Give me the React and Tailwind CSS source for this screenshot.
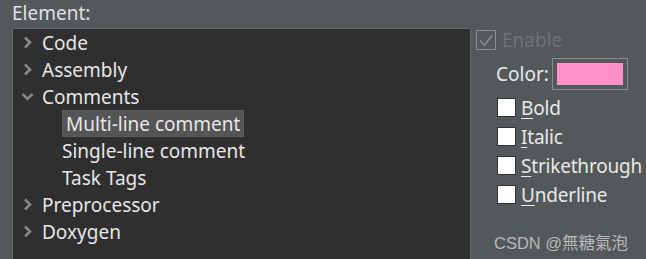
import React from "react";

const FONT = { fontFamily: '"Noto Sans", "Open Sans", "Noto Sans CJK SC", sans-serif' };

function Chevron({ open }) {
  return (
    <svg width="13" height="13" viewBox="0 0 13 13" className="shrink-0">
      {open ? (
        <polyline points="1.5,4 6.5,9 11.5,4" fill="none" stroke="#858585" strokeWidth="2.6" />
      ) : (
        <polyline points="4,1.5 9,6.5 4,11.5" fill="none" stroke="#858585" strokeWidth="2.6" />
      )}
    </svg>
  );
}

function Row({ label, level = 0, arrow, selected }) {
  return (
    <div className="h-[27px] flex items-center">
      {level === 0 ? (
        <div className="w-[29px] pl-[8px] flex items-center">
          <Chevron open={arrow === "open"} />
        </div>
      ) : (
        <div className="w-[49px]" />
      )}
      <span
        className={
          selected
            ? "h-[27px] flex items-center pl-[3px] pr-[3px] bg-[#555555] border border-[#5e5e5e]"
            : ""
        }
      >
        {label}
      </span>
    </div>
  );
}

function Check({ label, u }) {
  const rest = label.slice(1);
  return (
    <div className="flex items-center h-[29px] pl-[26px] gap-[5px]">
      <div className="w-[19px] h-[19px] bg-white border border-[#333]" />
      <span className="text-[#e8e8e8] tracking-[-0.2px]">
        <span className="underline underline-offset-[3px] decoration-1">{u}</span>
        {rest}
      </span>
    </div>
  );
}

export default function App() {
  return (
    <div className="w-[646px] h-[259px] bg-[#53585a] text-[19px] leading-[24px] text-[#e6e6e6] overflow-hidden flex flex-col" style={FONT}>
      <div className="h-[28px] shrink-0 pl-[12px] leading-[26px] text-[#e0e0e0]">Element:</div>
      <div className="flex flex-1 min-h-0">
        <div className="ml-[12px] w-[459px] bg-[#2f2f2f] border-l border-t border-r border-[#62676a]">
          <Row label="Code" arrow="closed" />
          <Row label="Assembly" arrow="closed" />
          <Row label="Comments" arrow="open" />
          <Row label="Multi-line comment" level={1} selected />
          <Row label="Single-line comment" level={1} />
          <Row label="Task Tags" level={1} />
          <Row label="Preprocessor" arrow="closed" />
          <Row label="Doxygen" arrow="closed" />
        </div>
        <div className="flex-1 flex flex-col relative">
          <div className="flex items-center h-[24px] pl-[5px] gap-[6px]">
            <div className="w-[20px] h-[20px] border border-[#8d9092] flex items-center justify-center">
              <svg width="16" height="16" viewBox="0 0 16 16">
                <polyline points="2,8.5 6.5,13 14,3.5" fill="none" stroke="#8d9092" strokeWidth="1.5" />
              </svg>
            </div>
            <span className="text-[#6e7375]">Enable</span>
          </div>
          <div className="flex items-center h-[32px] mt-[6px] pl-[25px] gap-[3px]">
            <span className="text-[#e8e8e8]">Color:</span>
            <div className="w-[76px] h-[32px] border border-[#8a8d8f] p-[4px]">
              <div className="w-full h-full bg-[#ff91c8]" />
            </div>
          </div>
          <div className="mt-[3px]">
            <Check label="Bold" u="B" />
            <Check label="Italic" u="I" />
            <Check label="Strikethrough" u="S" />
            <Check label="Underline" u="U" />
          </div>
          <div className="absolute left-[23px] bottom-[4px] text-[16.5px] text-[#b8b8b8]" style={{ fontFamily: '"Liberation Sans", "Noto Sans CJK SC", sans-serif' }}>
            CSDN @無糖氣泡
          </div>
        </div>
      </div>
    </div>
  );
}
